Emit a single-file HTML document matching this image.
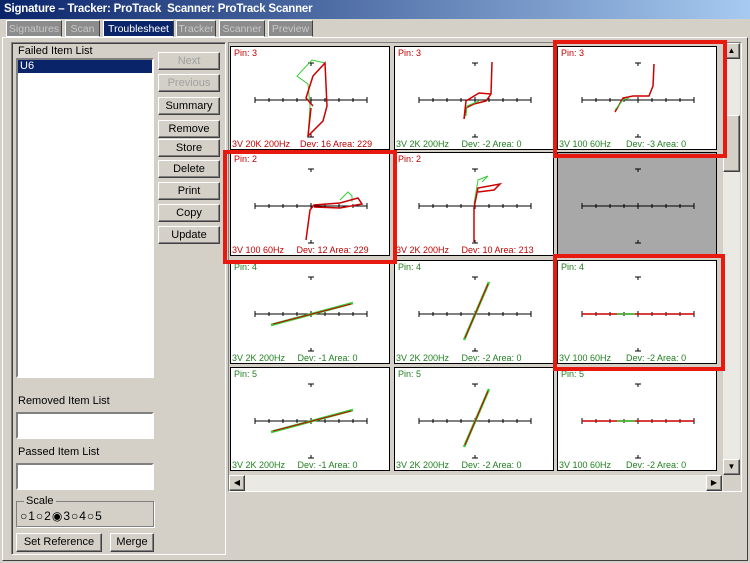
<!DOCTYPE html>
<html><head><style>
*{box-sizing:border-box;margin:0;padding:0}
body{width:750px;height:563px;background:#d4d0c8;font-family:"Liberation Sans",sans-serif;font-size:11px;position:relative;overflow:hidden}
.abs{position:absolute}
.title{left:0;top:0;width:750px;height:19px;background:linear-gradient(90deg,#0a246a,#a6caf0);color:#fff;font-weight:bold;font-size:11.5px;padding:3px 4px;letter-spacing:-0.2px;white-space:nowrap}
.tab{top:20px;height:17px;background:#8c8c8c;color:#c8c8c8;font-size:10.5px;padding:2px 0;text-align:center;border:1px solid #fff;border-right-color:#404040;white-space:nowrap;overflow:hidden}
.tab.on{background:#0a246a;color:#fff}
.btn{left:158px;width:62px;height:18px;background:#d4d0c8;border:1px solid;border-color:#fff #404040 #404040 #fff;box-shadow:inset -1px -1px #808080;text-align:center;line-height:16px;font-size:11px}
.dis{color:#a0a0a0}
.field{background:#fff;border:2px solid;border-color:#808080 #fff #fff #808080}
</style></head><body>
<div class="abs title">Signature – Tracker: ProTrack&nbsp; Scanner: ProTrack Scanner</div>
<div class="abs tab" style="left:6px;width:56px">Signatures</div>
<div class="abs tab" style="left:65px;width:35px">Scan</div>
<div class="abs tab on" style="left:103px;width:71px">Troublesheet</div>
<div class="abs tab" style="left:176px;width:40px">Tracker</div>
<div class="abs tab" style="left:219px;width:46px">Scanner</div>
<div class="abs tab" style="left:268px;width:45px">Preview</div>
<div class="abs" style="left:2px;top:37px;width:746px;height:524px;border:1px solid;border-color:#fff #404040 #404040 #fff"></div>
<div class="abs" style="left:11px;top:42px;width:215px;height:513px;border:1px solid;border-color:#808080 #fff #fff #808080;box-shadow:inset 1px 1px #404040"></div>
<div class="abs" style="left:18px;top:45px">Failed Item List</div>
<div class="abs field" style="left:16px;top:58px;width:138px;height:320px"><div style="background:#0a246a;color:#fff;padding-left:2px;height:13px;line-height:13px">U6</div></div>
<div class="abs btn dis" style="top:52px">Next</div>
<div class="abs btn dis" style="top:74px">Previous</div>
<div class="abs btn" style="top:97px">Summary</div>
<div class="abs btn" style="top:120px">Remove</div>
<div class="abs btn" style="top:139px">Store</div>
<div class="abs btn" style="top:160px">Delete</div>
<div class="abs btn" style="top:182px">Print</div>
<div class="abs btn" style="top:204px">Copy</div>
<div class="abs btn" style="top:226px">Update</div>
<div class="abs" style="left:18px;top:395px">Removed Item List</div>
<div class="abs field" style="left:16px;top:412px;width:138px;height:27px"></div>
<div class="abs" style="left:18px;top:446px">Passed Item List</div>
<div class="abs field" style="left:16px;top:463px;width:138px;height:27px"></div>
<div class="abs" style="left:16px;top:501px;width:138px;height:26px;border:1px solid #808080;box-shadow:1px 1px #fff"></div>
<div class="abs" style="left:24px;top:495px;background:#d4d0c8;padding:0 2px">Scale</div>
<div class="abs" style="left:20px;top:509px;font-size:12px;letter-spacing:1px">○1○2◉3○4○5</div>
<div class="abs btn" style="left:16px;top:533px;width:86px;height:19px">Set Reference</div>
<div class="abs btn" style="left:110px;top:533px;width:44px;height:19px">Merge</div>
<div class="abs" style="left:228px;top:42px;width:514px;height:450px;border:1px solid;border-color:#808080 #fff #fff #808080"></div>
<div class="abs" style="left:723px;top:43px;width:17px;height:432px;background:#ebe9e4"></div>
<div class="abs btn" style="left:723px;top:43px;width:17px;height:16px;font-size:8px;line-height:14px">▲</div>
<div class="abs btn" style="left:723px;top:115px;width:17px;height:57px"></div>
<div class="abs btn" style="left:723px;top:459px;width:17px;height:16px;font-size:8px;line-height:14px">▼</div>
<div class="abs" style="left:229px;top:475px;width:494px;height:16px;background:#ebe9e4"></div>
<div class="abs btn" style="left:229px;top:475px;width:16px;height:16px;font-size:8px;line-height:14px">◀</div>
<div class="abs btn" style="left:706px;top:475px;width:16px;height:16px;font-size:8px;line-height:14px">▶</div>
<svg class="abs" style="left:0;top:0" width="750" height="563" font-family="Liberation Sans" font-size="9">
<defs>
<g id="ax" stroke="#000" stroke-width="1" fill="none">
<path d="M25,54H137M25,51v6M39,52v4M53,52v4M67,52v4M81,51v6M78,54h6M95,52v4M109,52v4M123,52v4M137,51v6"/>
<path d="M78,17h6M81,17v3M78,91h6M81,88v3"/>
</g>
</defs>
<g transform="translate(230,46)"><rect x=".5" y=".5" width="159" height="103" fill="#fff" stroke="#000"/><use href="#ax"/>
<text x="4" y="10" fill="#c00000">Pin: 3</text><text x="2" y="101" fill="#c00000">3V 20K 200Hz&#160;&#160;&#160; Dev: 16 Area: 229</text>
<path d="M95,17 L82,14 L67,30 L78,38 L80,60 L78,90" stroke="#3c3" fill="none"/>
<path d="M83,60 L76,52 L83,30 L95,17 L97,60 L93,75 L78,90 L81,62" stroke="#c00" stroke-width="1.5" fill="none"/></g>
<g transform="translate(394,46)"><rect x=".5" y=".5" width="159" height="103" fill="#fff" stroke="#000"/><use href="#ax"/>
<text x="4" y="10" fill="#c00000">Pin: 3</text><text x="2" y="101" fill="#208020">3V 2K 200Hz&#160;&#160;&#160;&#160; Dev: -2 Area: 0</text>
<path d="M70,73 L72,62 L80,58 L92,55 L97,48 L98,16 M97,48 L85,47 L72,55 L70,73" stroke="#c00" stroke-width="1.5" fill="none"/>
<path d="M72,70 L73,60 L85,55" stroke="#3c3" fill="none"/></g>
<g transform="translate(557,46)"><rect x=".5" y=".5" width="159" height="103" fill="#fff" stroke="#000"/><use href="#ax"/>
<text x="4" y="10" fill="#c00000">Pin: 3</text><text x="2" y="101" fill="#208020">3V 100 60Hz&#160;&#160;&#160;&#160;&#160; Dev: -3 Area: 0</text>
<path d="M58,66 L66,52 L76,50 L92,50 L96,40 L97,18" stroke="#c00" stroke-width="1.5" fill="none"/>
<path d="M58,64 L66,54 L72,52" stroke="#3c3" fill="none"/></g>
<g transform="translate(230,152)"><rect x=".5" y=".5" width="159" height="103" fill="#fff" stroke="#000"/><use href="#ax"/>
<text x="4" y="10" fill="#c00000">Pin: 2</text><text x="2" y="101" fill="#c00000">3V 100 60Hz&#160;&#160;&#160;&#160; Dev: 12 Area: 229</text>
<path d="M110,48 L118,40 L122,44 L122,50" stroke="#3c3" fill="none"/>
<path d="M76,88 L80,58 L84,53 L110,51 L128,46 L132,52 L110,56 L84,55" stroke="#c00" stroke-width="1.5" fill="none"/></g>
<g transform="translate(394,152)"><rect x=".5" y=".5" width="159" height="103" fill="#fff" stroke="#000"/><use href="#ax"/>
<text x="4" y="10" fill="#c00000">Pin: 2</text><text x="2" y="101" fill="#c00000">3V 2K 200Hz&#160;&#160;&#160;&#160; Dev: 10 Area: 213</text>
<path d="M80,52 L84,28 L94,24 L88,30" stroke="#3c3" fill="none"/>
<path d="M80,90 L80,56 L84,36 L106,32 L100,38 L84,40" stroke="#c00" stroke-width="1.5" fill="none"/></g>
<g transform="translate(557,152)"><rect x=".5" y=".5" width="159" height="103" fill="#a8a8a8" stroke="#000"/><use href="#ax"/></g>
<g transform="translate(230,260)"><rect x=".5" y=".5" width="159" height="103" fill="#fff" stroke="#000"/><use href="#ax"/>
<text x="4" y="10" fill="#208020">Pin: 4</text><text x="2" y="101" fill="#208020">3V 2K 200Hz&#160;&#160;&#160;&#160; Dev: -1 Area: 0</text>
<path d="M41,65 L123,43" stroke="#3c3" stroke-width="2.5"/><path d="M43,64 L121,44" stroke="#c00" stroke-width="1"/></g>
<g transform="translate(394,260)"><rect x=".5" y=".5" width="159" height="103" fill="#fff" stroke="#000"/><use href="#ax"/>
<text x="4" y="10" fill="#208020">Pin: 4</text><text x="2" y="101" fill="#208020">3V 2K 200Hz&#160;&#160;&#160;&#160; Dev: -2 Area: 0</text>
<path d="M70,80 L95,22" stroke="#3c3" stroke-width="2.5"/><path d="M71,78 L94,24" stroke="#c00"/></g>
<g transform="translate(557,260)"><rect x=".5" y=".5" width="159" height="103" fill="#fff" stroke="#000"/><use href="#ax"/>
<text x="4" y="10" fill="#208020">Pin: 4</text><text x="2" y="101" fill="#208020">3V 100 60Hz&#160;&#160;&#160;&#160;&#160; Dev: -2 Area: 0</text>
<path d="M25,54H137" stroke="#c00" stroke-width="1.5"/><path d="M60,54H78" stroke="#3c3" stroke-width="1.5"/></g>
<g transform="translate(230,367)"><rect x=".5" y=".5" width="159" height="103" fill="#fff" stroke="#000"/><use href="#ax"/>
<text x="4" y="10" fill="#208020">Pin: 5</text><text x="2" y="101" fill="#208020">3V 2K 200Hz&#160;&#160;&#160;&#160; Dev: -1 Area: 0</text>
<path d="M41,65 L123,43" stroke="#3c3" stroke-width="2.5"/><path d="M43,64 L121,44" stroke="#c00"/></g>
<g transform="translate(394,367)"><rect x=".5" y=".5" width="159" height="103" fill="#fff" stroke="#000"/><use href="#ax"/>
<text x="4" y="10" fill="#208020">Pin: 5</text><text x="2" y="101" fill="#208020">3V 2K 200Hz&#160;&#160;&#160;&#160; Dev: -2 Area: 0</text>
<path d="M70,80 L95,22" stroke="#3c3" stroke-width="2.5"/><path d="M71,78 L94,24" stroke="#c00"/></g>
<g transform="translate(557,367)"><rect x=".5" y=".5" width="159" height="103" fill="#fff" stroke="#000"/><use href="#ax"/>
<text x="4" y="10" fill="#208020">Pin: 5</text><text x="2" y="101" fill="#208020">3V 100 60Hz&#160;&#160;&#160;&#160;&#160; Dev: -2 Area: 0</text>
<path d="M25,54H137" stroke="#c00" stroke-width="1.5"/><path d="M60,54H78" stroke="#3c3" stroke-width="1.5"/></g>
<g fill="none" stroke="#e8190f" stroke-width="4">
<rect x="555" y="42" width="170" height="114"/>
<rect x="225" y="152" width="170" height="110"/>
<rect x="555" y="256" width="168" height="113"/>
</g>
</svg>
</body></html>
